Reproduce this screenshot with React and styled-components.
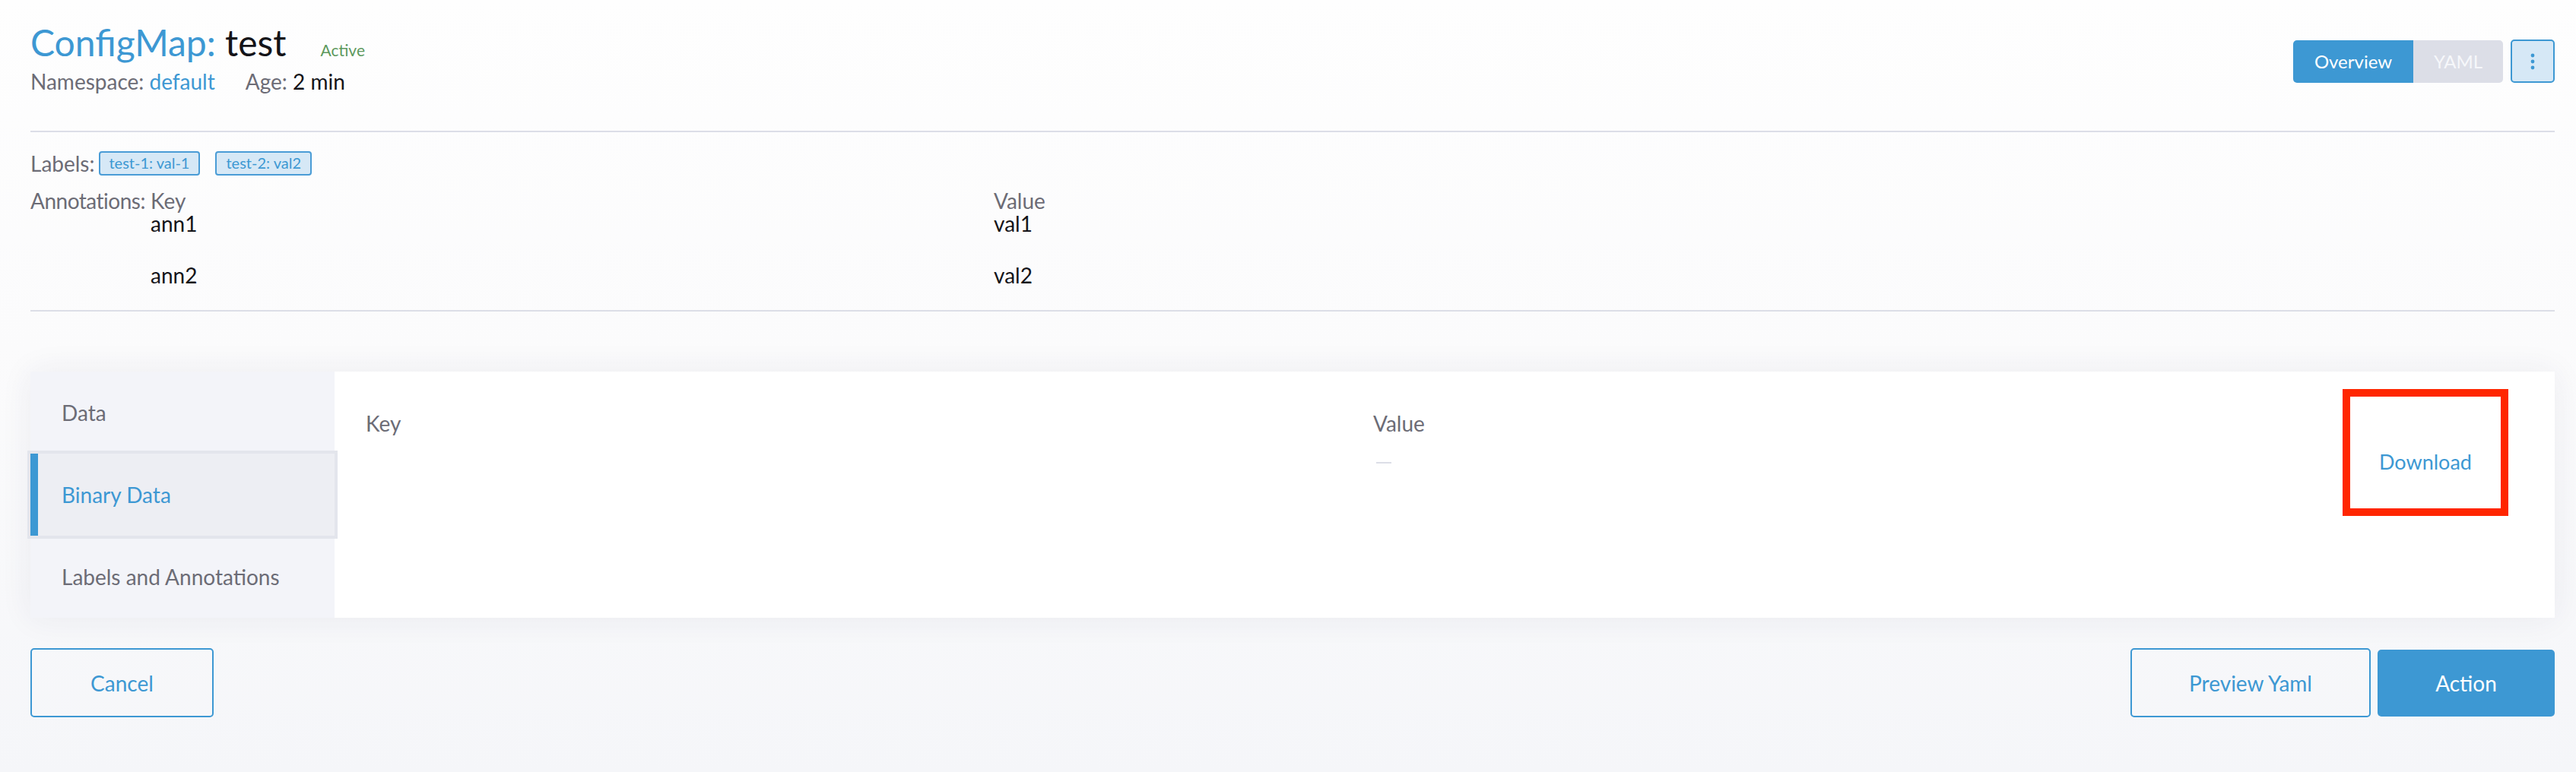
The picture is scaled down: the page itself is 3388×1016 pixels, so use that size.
import { Fragment } from "react";
import styled, { createGlobalStyle } from "styled-components";

const GlobalStyle = createGlobalStyle`
  html, body {
    margin: 0;
    padding: 0;
  }
  body {
    font-family: "Lato", "Liberation Sans", sans-serif;
    background: linear-gradient(#fefefe, #fbfbfc 45%, #f5f6f9);
    color: #141419;
  }
  * {
    box-sizing: border-box;
  }
`;

const Page = styled.div`
  min-height: 1016px;
  padding: 0 28px 0 40px;
  display: flex;
  flex-direction: column;
`;

const Header = styled.header`
  height: 174px;
  padding-top: 28px;
  display: flex;
  justify-content: space-between;
  align-items: flex-start;
  border-bottom: 2px solid #dcdee7;
`;

const TitleRow = styled.div`
  display: flex;
  align-items: baseline;
`;

const Title = styled.h1`
  margin: 0;
  font-size: 48px;
  line-height: 56px;
  font-weight: 400;
  color: #141419;
`;

const Kind = styled.span`
  color: #3d98d3;
`;

const Status = styled.span`
  margin-left: 45px;
  font-size: 21px;
  color: #5d995d;
`;

const SubTitle = styled.div`
  margin-top: 5px;
  display: flex;
  gap: 40px;
  font-size: 28px;
  line-height: 36px;
`;

const Muted = styled.span`
  color: #6c6c76;
`;

const Link = styled.span`
  color: #3d98d3;
`;

const Actions = styled.div`
  margin-top: 24px;
  display: flex;
  align-items: center;
  gap: 10px;
`;

const Segmented = styled.div`
  display: flex;
  border-radius: 5px;
  overflow: hidden;
`;

const SegButton = styled.button`
  height: 56px;
  width: ${(p) => p.$w}px;
  border: none;
  font-family: inherit;
  font-size: 24px;
  color: ${(p) => (p.$active ? "#fff" : "#f6f7fa")};
  background: ${(p) => (p.$active ? "#3d98d3" : "#dcdee7")};
`;

const Kebab = styled.button`
  width: 58px;
  height: 57px;
  border: 2px solid #3d98d3;
  border-radius: 5px;
  background: #d6e8f6;
  display: flex;
  align-items: center;
  justify-content: center;
  padding: 0;
`;

const Meta = styled.section`
  padding-top: 25px;
  padding-bottom: 31px;
  border-bottom: 2px solid #dcdee7;
`;

const LabelsRow = styled.div`
  display: flex;
  align-items: center;
  font-size: 28px;
  height: 32px;
`;

const Tags = styled.div`
  display: flex;
  gap: 20px;
  margin-left: 5px;
`;

const Tag = styled.span`
  height: 32px;
  padding: 0 12px 2px;
  display: flex;
  align-items: center;
  font-size: 20px;
  color: #3d98d3;
  background: #d6e8f6;
  border: 2px solid #4a9cd6;
  border-radius: 4px;
`;

const AnnoRow = styled.div`
  margin-top: 18px;
  display: flex;
  font-size: 28px;
  line-height: 30px;
`;

const AnnoLabel = styled.span`
  width: 158px;
  flex: none;
  white-space: nowrap;
  letter-spacing: -0.5px;
  color: #6c6c76;
`;

const AnnoTable = styled.div`
  display: grid;
  grid-template-columns: 1109px 1fr;
  flex: 1;
`;

const HeadCell = styled.div`
  color: #6c6c76;
`;

const Cell = styled.div`
  padding-bottom: ${(p) => (p.$last ? 0 : 38)}px;
  color: #141419;
`;

const Panel = styled.div`
  margin-top: 79px;
  height: 324px;
  display: flex;
  background: #fff;
  box-shadow: 0 0 40px rgba(40, 45, 80, 0.07);
`;

const Side = styled.nav`
  width: 400px;
  background: #f3f4f9;
  display: flex;
  flex-direction: column;
`;

const Tab = styled.div`
  height: 108px;
  padding-left: ${(p) => (p.$active ? 31 : 41)}px;
  display: flex;
  align-items: center;
  font-size: 28px;
  color: ${(p) => (p.$active ? "#3d98d3" : "#6c6c76")};
  background: ${(p) => (p.$active ? "#edeef3" : "transparent")};
  outline: ${(p) => (p.$active ? "4px solid #e3e5ec" : "none")};
  border-left: ${(p) => (p.$active ? "10px solid #3d98d3" : "none")};
`;

const Content = styled.div`
  flex: 1;
  display: flex;
  align-items: flex-start;
  padding: 23px 61px 0 41px;
  font-size: 28px;
  line-height: 36px;
`;

const Column = styled.div`
  width: ${(p) => (p.$w ? `${p.$w}px` : "auto")};
  flex: ${(p) => (p.$w ? "none" : 1)};
  padding-top: 27px;
  display: flex;
  flex-direction: column;
`;

const ColHead = styled.div`
  color: #6c6c76;
`;

const Dash = styled.div`
  width: 20px;
  height: 2px;
  margin: 33px 0 0 4px;
  background: #dcdee7;
`;

const Highlight = styled.div`
  width: 218px;
  height: 167px;
  border: 10px solid #ff2600;
  display: flex;
  justify-content: center;
  align-items: center;
  padding-top: 24px;
`;

const DownloadLink = styled.a`
  color: #3d98d3;
  font-size: 27px;
  cursor: pointer;
`;

const Footer = styled.footer`
  margin-top: 40px;
  display: flex;
  justify-content: space-between;
  align-items: center;
`;

const FooterRight = styled.div`
  display: flex;
  gap: 9px;
  align-items: center;
`;

const Button = styled.button`
  width: ${(p) => p.$w}px;
  height: ${(p) => (p.$primary ? 88 : 91)}px;
  border-radius: 5px;
  font-family: inherit;
  font-size: 28px;
  border: ${(p) => (p.$primary ? "none" : "2px solid #3d98d3")};
  background: ${(p) => (p.$primary ? "#3d98d3" : "transparent")};
  color: ${(p) => (p.$primary ? "#fff" : "#3d98d3")};
`;

function KebabIcon() {
  return (
    <svg width="8" height="24" viewBox="0 0 8 24">
      <circle cx="4" cy="4" r="2.4" fill="#3d98d3" />
      <circle cx="4" cy="12" r="2.4" fill="#3d98d3" />
      <circle cx="4" cy="20" r="2.4" fill="#3d98d3" />
    </svg>
  );
}

const annotations = [
  { key: "ann1", value: "val1" },
  { key: "ann2", value: "val2" },
];

export default function App() {
  return (
    <>
      <GlobalStyle />
      <Page>
        <Header>
          <div>
            <TitleRow>
              <Title>
                <Kind>ConfigMap:</Kind> test
              </Title>
              <Status>Active</Status>
            </TitleRow>
            <SubTitle>
              <span>
                <Muted>Namespace: </Muted>
                <Link>default</Link>
              </span>
              <span>
                <Muted>Age: </Muted>2 min
              </span>
            </SubTitle>
          </div>
          <Actions>
            <Segmented>
              <SegButton $active $w={158}>Overview</SegButton>
              <SegButton $w={118}>YAML</SegButton>
            </Segmented>
            <Kebab>
              <KebabIcon />
            </Kebab>
          </Actions>
        </Header>

        <Meta>
          <LabelsRow>
            <Muted>Labels:</Muted>
            <Tags>
              <Tag>test-1: val-1</Tag>
              <Tag>test-2: val2</Tag>
            </Tags>
          </LabelsRow>
          <AnnoRow>
            <AnnoLabel>Annotations:</AnnoLabel>
            <AnnoTable>
              <HeadCell>Key</HeadCell>
              <HeadCell>Value</HeadCell>
              {annotations.map((a, i) => (
                <Fragment key={a.key}>
                  <Cell $last={i === annotations.length - 1}>{a.key}</Cell>
                  <Cell $last={i === annotations.length - 1}>{a.value}</Cell>
                </Fragment>
              ))}
            </AnnoTable>
          </AnnoRow>
        </Meta>

        <Panel>
          <Side>
            <Tab>Data</Tab>
            <Tab $active>Binary Data</Tab>
            <Tab>Labels and Annotations</Tab>
          </Side>
          <Content>
            <Column $w={1325}>
              <ColHead>Key</ColHead>
            </Column>
            <Column>
              <ColHead>Value</ColHead>
              <Dash />
            </Column>
            <Highlight>
              <DownloadLink>Download</DownloadLink>
            </Highlight>
          </Content>
        </Panel>

        <Footer>
          <Button $w={241}>Cancel</Button>
          <FooterRight>
            <Button $w={316}>Preview Yaml</Button>
            <Button $primary $w={233}>Action</Button>
          </FooterRight>
        </Footer>
      </Page>
    </>
  );
}
